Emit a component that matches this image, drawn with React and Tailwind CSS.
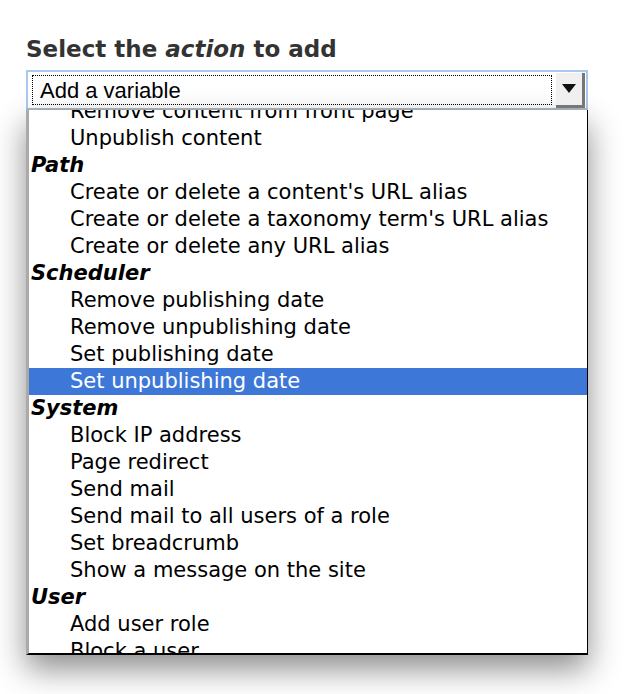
import React from "react";

const rows = [
  { t: "Remove content from front page" },
  { t: "Unpublish content" },
  { t: "Path", g: true },
  { t: "Create or delete a content's URL alias" },
  { t: "Create or delete a taxonomy term's URL alias" },
  { t: "Create or delete any URL alias" },
  { t: "Scheduler", g: true },
  { t: "Remove publishing date" },
  { t: "Remove unpublishing date" },
  { t: "Set publishing date" },
  { t: "Set unpublishing date", sel: true },
  { t: "System", g: true },
  { t: "Block IP address" },
  { t: "Page redirect" },
  { t: "Send mail" },
  { t: "Send mail to all users of a role" },
  { t: "Set breadcrumb" },
  { t: "Show a message on the site" },
  { t: "User", g: true },
  { t: "Add user role" },
  { t: "Block a user" },
];

export default function App() {
  return (
    <div className="w-[625px] h-[694px] bg-white overflow-hidden pl-[26px] pt-[34px]">
      <h2
        className="text-[23px] leading-[30px] font-bold text-[#333] mb-[6px]"
        style={{ fontFamily: '"DejaVu Sans", sans-serif' }}
      >
        Select the <em>action</em> to add
      </h2>
      <div className="w-[562px]">
        <div className="h-[40px] border-2 border-[#a9c9ef] border-b-[#b0b8c0] bg-white flex items-center pl-[4px] pr-[1px]">
          <div
            className="flex-1 h-[30px] border border-dotted border-black flex items-center pl-[7px] text-[22px] text-black"
            style={{ fontFamily: '"Liberation Sans", Arial, sans-serif' }}
          >
            Add a variable
          </div>
          <div className="ml-[4px] w-[29px] h-[35px] bg-[#f0f0f0] border-r-[3px] border-b-[3px] border-r-[#777] border-b-[#777] flex items-center justify-center">
            <svg width="14" height="9" viewBox="0 0 14 9">
              <path d="M0 0 H14 L7 9 Z" fill="#111" />
            </svg>
          </div>
        </div>
        <div className="h-[545px] overflow-hidden bg-white border-l-[3px] border-l-[#aaa] border-r border-r-black border-b-2 border-b-black shadow-[0_14px_30px_rgba(0,0,0,0.45)]">
          <div
            className="-mt-[12px]"
            style={{ fontFamily: '"DejaVu Sans", sans-serif' }}
          >
            {rows.map((r, i) => (
              <div
                key={i}
                className={
                  "h-[27px] flex items-center text-[21px] whitespace-nowrap " +
                  (r.g
                    ? "pl-[2px] font-bold italic text-black"
                    : r.sel
                    ? "pl-[41px] bg-[#3d78d8] text-white"
                    : "pl-[41px] text-black")
                }
              >
                {r.t}
              </div>
            ))}
          </div>
        </div>
      </div>
    </div>
  );
}
